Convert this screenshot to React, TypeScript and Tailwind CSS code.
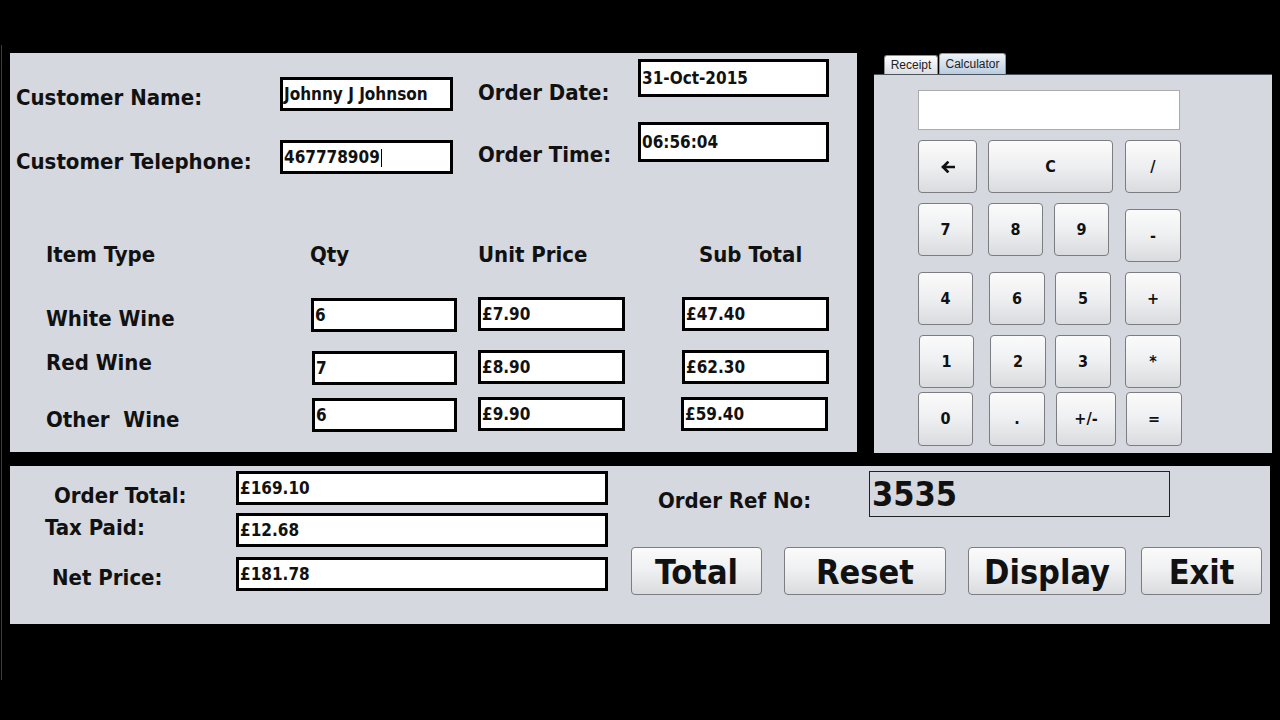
import React from "react";

const LABEL =
  "font-['DejaVu_Sans_Condensed','DejaVu_Sans',sans-serif] [font-stretch:condensed] font-bold text-[22px] leading-[26px] text-[#111] whitespace-pre";
const NARROW =
  "font-['DejaVu_Sans_Condensed','DejaVu_Sans',sans-serif] [font-stretch:condensed] font-bold text-[#111] whitespace-pre";

function Field({ value, className, caret }: { value: string; className: string; caret?: boolean }) {
  return (
    <div
      className={`flex items-center border-[3px] border-black bg-white pl-[1px] pt-[2px] font-['DejaVu_Sans_Condensed','DejaVu_Sans',sans-serif] [font-stretch:condensed] text-[17px] font-bold text-[#111] ${className}`}
    >
      {value}
      {caret && <span className="ml-[1px] inline-block h-[18px] w-[1px] bg-black" />}
    </div>
  );
}

function CalcKey({ label, className }: { label: React.ReactNode; className: string }) {
  return (
    <button
      className={`flex items-center justify-center rounded-[4px] border border-[#7b7d80] bg-gradient-to-b from-[#fbfbfb] via-[#eeeff1] to-[#d9dbde] font-['DejaVu_Sans_Condensed','DejaVu_Sans',sans-serif] text-[16px] font-bold text-[#111] ${className}`}
    >
      {label}
    </button>
  );
}

function BigButton({ label, className }: { label: string; className: string }) {
  return (
    <button
      className={`flex h-[48px] items-center justify-center rounded-[4px] border border-[#7b7d80] bg-gradient-to-b from-[#fbfbfb] via-[#eeeff1] to-[#d9dbde] pt-[2px] ${NARROW} text-[34px] ${className}`}
    >
      {label}
    </button>
  );
}

function BackArrow() {
  return (
    <svg width="14" height="12" viewBox="0 0 14 12" fill="none">
      <path d="M6.5 1.5 L2 6 L6.5 10.5 M2 6 H13" stroke="#111" strokeWidth="2.6" strokeLinecap="square" />
    </svg>
  );
}

export default function App() {
  return (
    <div className="flex h-[720px] w-[1280px] overflow-hidden bg-black">
      <div className="ml-[1px] mt-[45px] h-[635px] w-[1px] bg-[#3c3c3c]" />
      <div className="ml-[8px] flex flex-col">
        {/* top row */}
        <div className="mt-[53px] flex items-start">
          {/* order panel */}
          <div className="flex h-[399px] w-[847px] flex-col bg-[#d5d8de]">
            <div className="flex">
              <div className="flex w-[468px] flex-col pl-[6px]">
                <div className="mt-[24px] flex items-start">
                  <div className={`${LABEL} mt-[8px] w-[264px]`}>Customer Name:</div>
                  <Field value="Johnny J Johnson" className="h-[34px] w-[173px]" />
                </div>
                <div className="mt-[29px] flex items-start">
                  <div className={`${LABEL} mt-[9px] w-[264px]`}>Customer Telephone:</div>
                  <Field value="467778909" caret className="h-[34px] w-[173px]" />
                </div>
              </div>
              <div className="flex flex-col">
                <div className="mt-[6px] flex items-start">
                  <div className={`${LABEL} mt-[21px] w-[160px]`}>Order Date:</div>
                  <Field value="31-Oct-2015" className="h-[38px] w-[191px]" />
                </div>
                <div className="mt-[16px] flex items-start">
                  <div className={`${LABEL} mt-[20px] w-[160px]`}>Order Time:</div>
                  <Field value="06:56:04" className="h-[40px] w-[191px]" />
                </div>
              </div>
            </div>

            {/* items table */}
            <div className="mt-[67px] flex pl-[36px]">
              <div className={`${LABEL} w-[264px]`}>Item Type</div>
              <div className={`${LABEL} w-[168px]`}>Qty</div>
              <div className={`${LABEL} w-[204px]`}>Unit Price</div>
              <div className={`${LABEL} pl-[17px]`}>Sub Total</div>
            </div>
            <div className="mt-[29px] flex items-start pl-[36px]">
              <div className={`${LABEL} mt-[9px] w-[264px]`}>White Wine</div>
              <div className="w-[168px] pl-[1px] pt-[1px]">
                <Field value="6" className="h-[34px] w-[146px]" />
              </div>
              <div className="w-[204px]">
                <Field value="£7.90" className="h-[34px] w-[147px]" />
              </div>
              <Field value="£47.40" className="h-[34px] w-[147px]" />
            </div>
            <div className="mt-[18px] flex items-start pl-[36px]">
              <div className={`${LABEL} w-[264px]`}>Red Wine</div>
              <div className="w-[168px] pl-[2px] pt-[1px]">
                <Field value="7" className="h-[34px] w-[145px]" />
              </div>
              <div className="w-[204px]">
                <Field value="£8.90" className="h-[34px] w-[147px]" />
              </div>
              <Field value="£62.30" className="h-[34px] w-[147px]" />
            </div>
            <div className="mt-[12px] flex items-start pl-[36px]">
              <div className={`${LABEL} mt-[10px] w-[264px]`}>Other  Wine</div>
              <div className="w-[168px] pl-[2px] pt-[1px]">
                <Field value="6" className="h-[34px] w-[145px]" />
              </div>
              <div className="w-[203px]">
                <Field value="£9.90" className="h-[34px] w-[147px]" />
              </div>
              <Field value="£59.40" className="h-[34px] w-[147px]" />
            </div>
          </div>

          {/* calculator tab panel */}
          <div className="ml-[17px] flex w-[398px] flex-col">
            <div className="flex h-[21px] items-end pl-[10px] font-['Liberation_Sans',Arial,sans-serif] text-[12px] text-[#222]">
              <div className="flex h-[19px] w-[54px] items-center justify-center rounded-t-[3px] border border-b-0 border-[#8e8f91] bg-gradient-to-b from-[#ffffff] to-[#dcdde0]">
                Receipt
              </div>
              <div className="ml-[1px] flex h-[21px] w-[67px] items-center justify-center rounded-t-[3px] border border-b-0 border-[#8a97a6] bg-gradient-to-b from-[#eef3f8] to-[#b9cde0]">
                Calculator
              </div>
            </div>
            <div className="flex h-[379px] flex-col border-t border-[#4b535c] bg-[#d5d8de] pl-[44px]">
              <div className="mt-[15px] h-[40px] w-[262px] border border-[#a9abae] bg-white" />
              <div className="mt-[10px] flex items-start">
                <CalcKey label={<BackArrow />} className="h-[53px] w-[59px]" />
                <CalcKey label="C" className="ml-[11px] h-[53px] w-[125px]" />
                <CalcKey label="/" className="ml-[12px] h-[53px] w-[56px]" />
              </div>
              <div className="mt-[10px] flex items-start">
                <CalcKey label="7" className="h-[53px] w-[55px]" />
                <CalcKey label="8" className="ml-[15px] h-[53px] w-[55px]" />
                <CalcKey label="9" className="ml-[11px] h-[53px] w-[55px]" />
                <CalcKey label="-" className="ml-[16px] mt-[6px] h-[53px] w-[56px]" />
              </div>
              <div className="mt-[10px] flex items-start">
                <CalcKey label="4" className="h-[53px] w-[55px]" />
                <CalcKey label="6" className="ml-[16px] h-[53px] w-[56px]" />
                <CalcKey label="5" className="ml-[10px] h-[53px] w-[56px]" />
                <CalcKey label="+" className="ml-[14px] h-[53px] w-[56px]" />
              </div>
              <div className="mt-[10px] flex items-start">
                <CalcKey label="1" className="ml-[1px] h-[53px] w-[55px]" />
                <CalcKey label="2" className="ml-[16px] h-[53px] w-[56px]" />
                <CalcKey label="3" className="ml-[9px] h-[53px] w-[56px]" />
                <CalcKey label="*" className="ml-[14px] h-[53px] w-[56px]" />
              </div>
              <div className="mt-[4px] flex items-start">
                <CalcKey label="0" className="h-[54px] w-[55px]" />
                <CalcKey label="." className="ml-[16px] h-[54px] w-[56px]" />
                <CalcKey label="+/-" className="ml-[11px] h-[54px] w-[60px]" />
                <CalcKey label="=" className="ml-[10px] h-[54px] w-[56px]" />
              </div>
            </div>
          </div>
        </div>

        {/* totals panel */}
        <div className="mt-[13px] flex h-[158px] w-[1260px] bg-[#d5d8de]">
          <div className="flex w-[621px] flex-col">
            <div className="mt-[5px] flex items-start">
              <div className={`${NARROW} mt-[12px] w-[226px] pl-[44px] text-[22px] leading-[26px]`}>Order Total:</div>
              <Field value="£169.10" className="h-[34px] w-[372px]" />
            </div>
            <div className="mt-[4px] flex items-start">
              <div className={`${NARROW} mt-[2px] w-[226px] pl-[35px] text-[22px] leading-[26px]`}>Tax Paid:</div>
              <Field value="£12.68" className="h-[34px] w-[372px]" />
            </div>
            <div className="mt-[10px] flex items-start">
              <div className={`${NARROW} mt-[8px] w-[226px] pl-[42px] text-[22px] leading-[26px]`}>Net Price:</div>
              <Field value="£181.78" className="h-[34px] w-[372px]" />
            </div>
          </div>
          <div className="flex flex-col">
            <div className="mt-[5px] flex items-start">
              <div className={`${NARROW} mt-[17px] w-[238px] pl-[27px] text-[22px] leading-[26px]`}>Order Ref No:</div>
              <div className="flex h-[46px] w-[301px] items-center border border-[#222] pl-[2px] font-['DejaVu_Sans_Condensed','DejaVu_Sans',sans-serif] [font-stretch:condensed] text-[34px] font-bold text-[#111]">
                3535
              </div>
            </div>
            <div className="mt-[30px] flex items-start">
              <BigButton label="Total" className="w-[131px]" />
              <BigButton label="Reset" className="ml-[22px] w-[162px]" />
              <BigButton label="Display" className="ml-[22px] w-[158px]" />
              <BigButton label="Exit" className="ml-[15px] w-[121px]" />
            </div>
          </div>
        </div>
      </div>
    </div>
  );
}
